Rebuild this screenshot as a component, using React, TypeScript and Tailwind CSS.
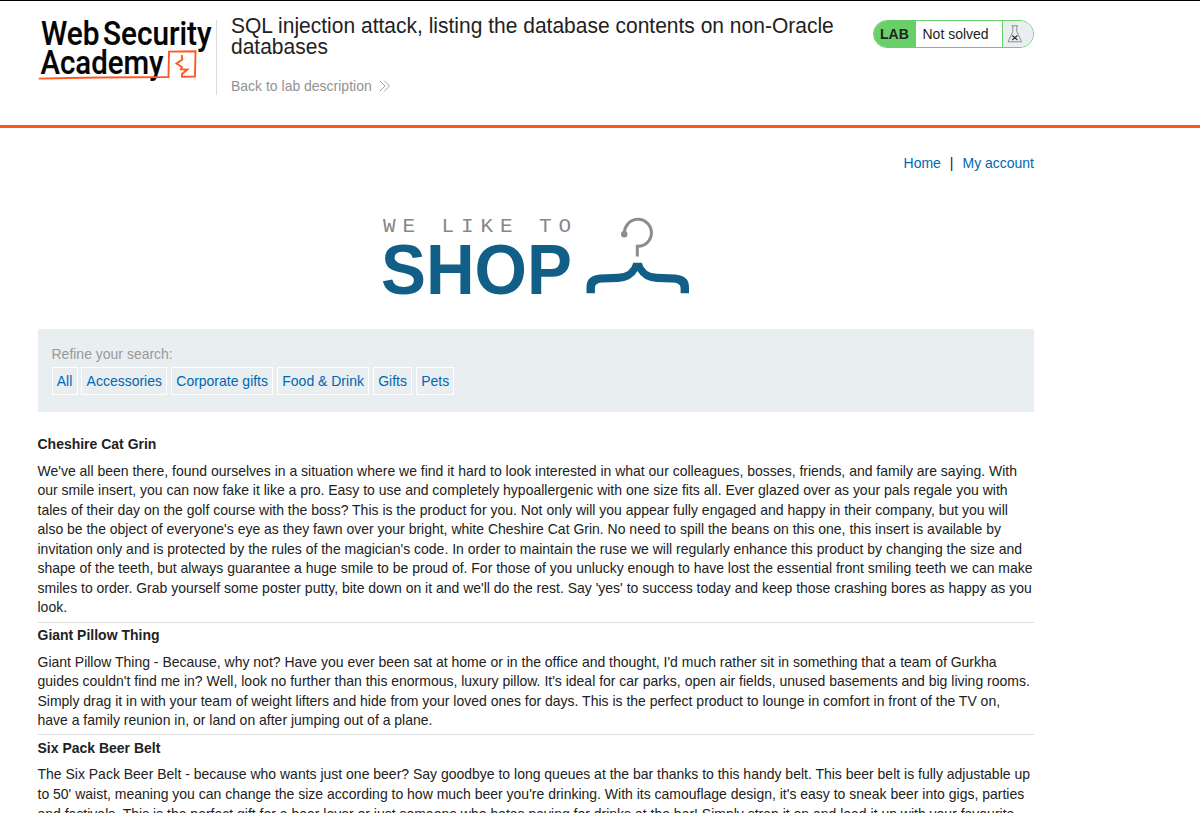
import type { ReactNode } from 'react';

interface Product {
  name: string;
  lines: string[];
}

const categories = ['All', 'Accessories', 'Corporate gifts', 'Food & Drink', 'Gifts', 'Pets'];

const products: Product[] = [
  {
    name: 'Cheshire Cat Grin',
    lines: [
      "We've all been there, found ourselves in a situation where we find it hard to look interested in what our colleagues, bosses, friends, and family are saying. With",
      'our smile insert, you can now fake it like a pro. Easy to use and completely hypoallergenic with one size fits all. Ever glazed over as your pals regale you with',
      'tales of their day on the golf course with the boss? This is the product for you. Not only will you appear fully engaged and happy in their company, but you will',
      "also be the object of everyone's eye as they fawn over your bright, white Cheshire Cat Grin. No need to spill the beans on this one, this insert is available by",
      "invitation only and is protected by the rules of the magician's code. In order to maintain the ruse we will regularly enhance this product by changing the size and",
      'shape of the teeth, but always guarantee a huge smile to be proud of. For those of you unlucky enough to have lost the essential front smiling teeth we can make',
      "smiles to order. Grab yourself some poster putty, bite down on it and we'll do the rest. Say 'yes' to success today and keep those crashing bores as happy as you",
      'look.',
    ],
  },
  {
    name: 'Giant Pillow Thing',
    lines: [
      "Giant Pillow Thing - Because, why not? Have you ever been sat at home or in the office and thought, I'd much rather sit in something that a team of Gurkha",
      "guides couldn't find me in? Well, look no further than this enormous, luxury pillow. It's ideal for car parks, open air fields, unused basements and big living rooms.",
      'Simply drag it in with your team of weight lifters and hide from your loved ones for days. This is the perfect product to lounge in comfort in front of the TV on,',
      'have a family reunion in, or land on after jumping out of a plane.',
    ],
  },
  {
    name: 'Six Pack Beer Belt',
    lines: [
      'The Six Pack Beer Belt - because who wants just one beer? Say goodbye to long queues at the bar thanks to this handy belt. This beer belt is fully adjustable up',
      "to 50' waist, meaning you can change the size according to how much beer you're drinking. With its camouflage design, it's easy to sneak beer into gigs, parties",
      'and festivals. This is the perfect gift for a beer lover or just someone who hates paying for drinks at the bar! Simply strap it on and load it up with your favourite',
    ],
  },
];

// slightly tall glyphs, stretched from the baseline
function Label({ children }: { children: ReactNode }) {
  return <span className="block origin-bottom translate-y-[0.4px] scale-y-[1.07] whitespace-nowrap">{children}</span>;
}

function AcademyLogo() {
  return (
    <svg className="block h-[64px] w-[178px] overflow-visible" viewBox="0 0 178 64" fill="none">
      <g fill="#050505" stroke="#050505" strokeWidth=".15" fontFamily="Roboto, sans-serif" fontWeight="500" fontSize="32.6">
        <text x="3" y="25.2" textLength="58.5" lengthAdjust="spacingAndGlyphs">Web</text>
        <text x="65" y="25.2" textLength="108.5" lengthAdjust="spacingAndGlyphs">Security</text>
        <text x="2.5" y="54" textLength="123" lengthAdjust="spacingAndGlyphs">Academy</text>
      </g>
      <path
        d="M.8 58.6 Q60 57.4 130.5 57 L131 31.6 L157.5 31.2 L157 56.5 L144 56.7 V54 L149.3 49.5 L143 49.3 L144 47 L138.5 43.5 L144.3 39.5 L143.7 35"
        stroke="#ff5a22"
        strokeWidth="1.9"
      />
    </svg>
  );
}

function ShopLogo() {
  return (
    <svg className="block h-[84px] w-[314px] overflow-visible" viewBox="380 214 314 84" fill="none">
      <text x="383" y="231.8" textLength="188" fontSize="21" fill="#85878a" fontFamily="Liberation Mono, monospace">
        WE LIKE TO
      </text>
      <text x="381" y="293.5" textLength="191" lengthAdjust="spacingAndGlyphs" fontSize="69.5" fontWeight="700" fill="#115f86" fontFamily="Liberation Sans, sans-serif">
        SHOP
      </text>
      <path d="M624.5 234 A13.5 13.5 0 1 1 637.3 246.3 V256.5" stroke="#8a8c8e" strokeWidth="3" />
      <circle cx="624.2" cy="234.3" r="3.2" fill="#8a8c8e" />
      <path
        d="M633.3 262.7 H641.8 Q644.5 273.5 657 273.8 L675 274.5 Q689 275.5 689 287 V293.3 H680.6 V288 Q680.6 282.5 672 282.5 L657 282 Q643 281 637.5 271 Q632 281 618 282 L603 282.5 Q594.9 282.5 594.9 288 V293.3 H586.5 V287 Q586.5 275.5 600 274.5 L618 273.8 Q630.5 273.5 633.3 262.7 Z"
        fill="#115f86"
      />
    </svg>
  );
}

function LabStatus() {
  return (
    <div className="flex h-7 w-[161px] overflow-hidden rounded-full border border-[#69cf69] bg-white text-[14px] leading-[27px] text-[#222]">
      <span className="w-[42px] bg-[#69cf69] pl-[6px] font-bold">
        <Label>LAB</Label>
      </span>
      <span className="w-[86px] pl-[6.5px]">
        <Label>Not solved</Label>
      </span>
      <span className="flex flex-1 items-center border-l border-[#69cf69] bg-[#e9eef1] pl-[4px]">
        <svg className="h-[18px] w-[16px]" viewBox="0 0 16 18" fill="none">
          <path d="M4.5 .8 H11 M5.8 1 V6.5 L1 16.8 H14.6 L9.8 6.5 V1" stroke="#777" strokeWidth=".8" />
          <path d="M5.2 10.5 L10.4 15 M10.4 10.5 L5.2 15" stroke="#333" strokeWidth="1.2" />
        </svg>
      </span>
    </div>
  );
}

export default function App() {
  return (
    <div className="h-[813px] overflow-hidden border-t border-black bg-white font-['Liberation_Sans',Arial,sans-serif] text-[13.99px] leading-[19.57px] text-[#222]">
      <header className="flex h-[127px] border-b-[3px] border-[#ff5619] pl-[38px]">
        <div className="mt-[19px] h-[75px] w-[179px] border-r border-[#dcdcdc]">
          <AcademyLogo />
        </div>
        <div className="w-[642px] pl-[14px] pt-[15.5px]">
          <h2 className="origin-bottom scale-y-[1.04] whitespace-nowrap text-[21px] leading-[20.2px]">
            SQL injection attack, listing the database contents on non-Oracle
            <br />
            databases
          </h2>
          <a className="mt-[20px] flex items-center gap-[7px] text-[#929292]" href="#">
            <Label>Back to lab description</Label>
            <svg className="mb-[2px] h-[12px] w-[12px]" viewBox="0 0 12 12" fill="none" stroke="#999" strokeWidth=".9">
              <path d="M.8 .8 L6 6 L.8 11.2 M5.4 .8 L10.6 6 L5.4 11.2" />
            </svg>
          </a>
        </div>
        <div className="pl-[14px] pt-[19px]">
          <LabStatus />
        </div>
      </header>

      <main className="ml-[37.5px] w-[996.5px]">
        <nav className="flex justify-end gap-[9px] pt-[26px] text-[#0068b1]">
          <a href="#"><Label>Home</Label></a>
          <span className="text-[#222]">|</span>
          <a href="#"><Label>My account</Label></a>
        </nav>

        <div className="mt-[40px] pl-[342.5px]">
          <ShopLogo />
        </div>

        <section className="mt-[31px] h-[83px] bg-[#e9eef1] pl-[14px] pt-[16px]">
          <p className="text-[#999]"><Label>Refine your search:</Label></p>
          <div className="mt-[2.5px] flex gap-[3.8px]">
            {categories.map((category) => (
              <a key={category} href="#" className="border border-white px-[4.25px] pb-[2.4px] pt-[4px] text-[#0068b1]">
                <Label>{category}</Label>
              </a>
            ))}
          </div>
        </section>

        <section className="mt-[23.4px]">
          {products.map((product) => (
            <article key={product.name} className="mb-[3.5px] border-b border-[#dedede] pb-[3.5px]">
              <h3 className="mb-[7px] font-bold"><Label>{product.name}</Label></h3>
              {product.lines.map((line) => (
                <p key={line}>
                  <Label>{line}</Label>
                </p>
              ))}
            </article>
          ))}
        </section>
      </main>
    </div>
  );
}
